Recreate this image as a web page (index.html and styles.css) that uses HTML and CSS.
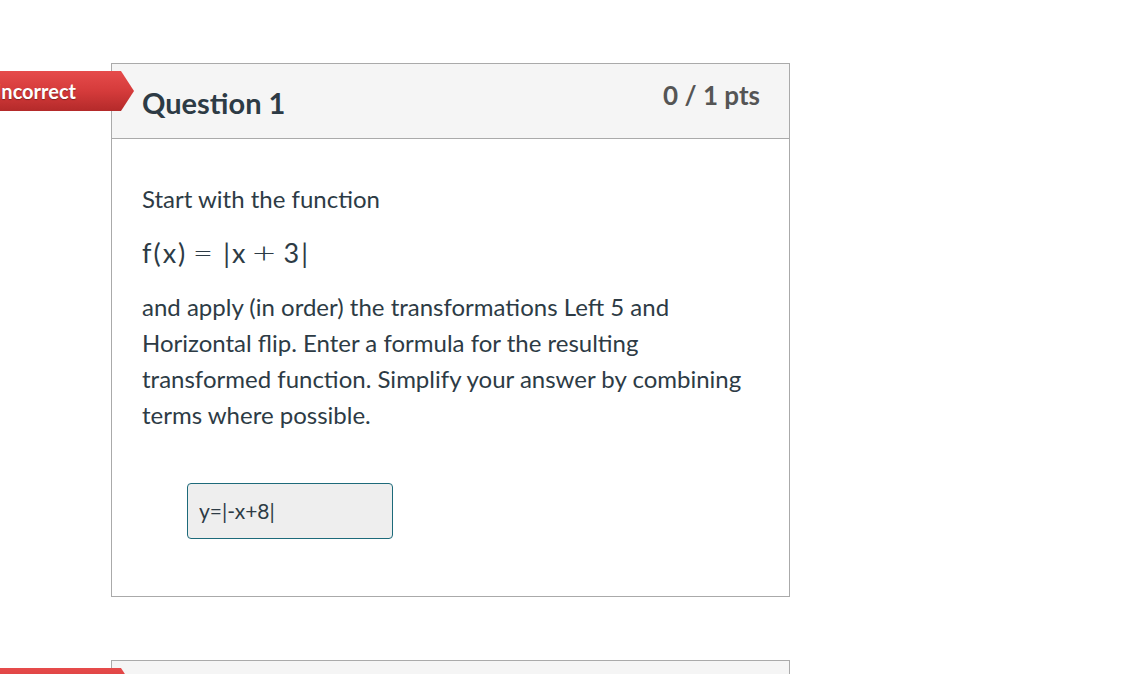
FILE: index.html
```html
<!DOCTYPE html>
<html lang="en">
<head>
  <meta charset="UTF-8">
  <meta name="viewport" content="width=device-width, initial-scale=1.0">
  <title>Quiz results</title>
  <link rel="stylesheet" href="styles.css">
</head>
<body>
  <div class="questions">
    <div class="question">
      <span class="answer-arrow incorrect">Incorrect</span>
      <div class="header">
        <span class="name">Question 1</span>
        <span class="points">0 / 1 pts</span>
      </div>
      <div class="text">
        <p>Start with the function</p>
        <p class="math"><span class="mi">f(x)</span><span class="op eq">=</span><span class="mi">|x</span><span class="op plus">+</span><span class="mi">3|</span></p>
        <p>and apply (in order) the transformations Left 5 and Horizontal flip. Enter a formula for the resulting transformed function. Simplify your answer by combining terms where possible.</p>
        <div class="answer">
          <input class="answer-box" type="text" value="y=|-x+8|" readonly>
        </div>
      </div>
    </div>

    <div class="question">
      <span class="answer-arrow incorrect"></span>
      <div class="header"></div>
    </div>
  </div>
</body>
</html>
```

FILE: styles.css
```css
body {
  margin: 0;
  padding: 0;
  background-color: #ffffff;
  color: #2d3b45;
  font-family: Lato, "Noto Sans", sans-serif;
  overflow: hidden;
}

.questions {
  padding: 63px 0 0 111px;
}

.question {
  position: relative;
  width: 677px;
  border: 1px solid #aaaaaa;
  margin-bottom: 63px;
}

.answer-arrow {
  position: absolute;
  top: 7px;
  right: calc(100% - 22px);
  box-sizing: border-box;
  width: 160px;
  height: 40px;
  line-height: 40px;
  padding-right: 58px;
  text-align: right;
  font-size: 20px;
  font-weight: bold;
  color: #ffffff;
  text-shadow: 0 1px 1px rgba(0, 0, 0, 0.35);
  clip-path: polygon(0 0, calc(100% - 13px) 0, 100% 50%, calc(100% - 13px) 100%, 0 100%);
}

.answer-arrow.incorrect {
  background: linear-gradient(to bottom, #e64b4b 0%, #d53b3b 50%, #b42a2a 100%);
}

.header {
  display: flex;
  justify-content: space-between;
  height: 74px;
  padding: 0 29px 0 30px;
  background-color: #f5f5f5;
  border-bottom: 1px solid #aaaaaa;
}

.header .name {
  font-size: 29px;
  font-weight: bold;
  color: #2d3b45;
  padding-top: 21px;
}

.header .points {
  font-size: 26px;
  font-weight: bold;
  color: #555555;
  padding-top: 15px;
}

.text {
  padding: 42px 30px 57px 30px;
  font-size: 24px;
  line-height: 36px;
}

.text p {
  margin: 0 0 18px 0;
}

.math {
  font-size: 27px;
}

.math .mi {
  letter-spacing: 2px;
}

.math .op {
  display: inline-block;
  font-weight: 300;
  text-align: center;
}

.math .eq {
  width: 20px;
  margin: 0 10px 0 6px;
  transform: scaleX(1.3);
}

.math .plus {
  width: 22px;
  margin: 0 9px 0 5px;
  transform: scaleX(1.5);
}

.answer {
  padding: 32px 0 0 45px;
}

.answer-box {
  box-sizing: border-box;
  width: 206px;
  height: 56px;
  padding: 0 11px 2px 11px;
  border: 1px solid #1d6a7a;
  border-radius: 4px;
  background-color: #eeeeee;
  font-family: Lato, "Noto Sans", sans-serif;
  font-size: 21px;
  color: #2d3b45;
  outline: none;
}
```
